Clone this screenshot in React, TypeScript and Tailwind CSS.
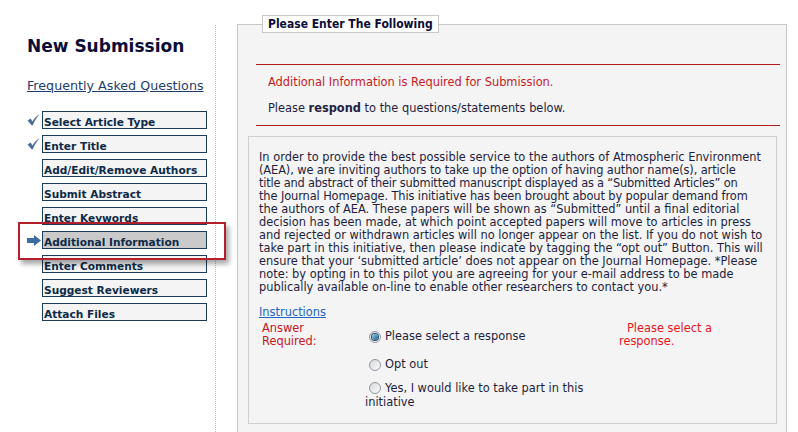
const steps = [
  { label: "Select Article Type", mark: "check" },
  { label: "Enter Title", mark: "check" },
  { label: "Add/Edit/Remove Authors" },
  { label: "Submit Abstract" },
  { label: "Enter Keywords" },
  { label: "Additional Information", mark: "arrow" },
  { label: "Enter Comments" },
  { label: "Suggest Reviewers" },
  { label: "Attach Files" },
];

// a few lines run wider in this font than in the original, so they get a little tracking
const paragraph = [
  { text: "In order to provide the best possible service to the authors of Atmospheric Environment", cls: "" },
  { text: "(AEA), we are inviting authors to take up the option of having author name(s), article", cls: "tracking-[-0.1px]" },
  { text: "title and abstract of their submitted manuscript displayed as a \u201cSubmitted Articles\u201d on", cls: "tracking-[-0.2px]" },
  { text: "the Journal Homepage. This initiative has been brought about by popular demand from", cls: "tracking-[-0.1px]" },
  { text: "the authors of AEA. These papers will be shown as \u201cSubmitted\u201d until a final editorial", cls: "" },
  { text: "decision has been made, at which point accepted papers will move to articles in press", cls: "" },
  { text: "and rejected or withdrawn articles will no longer appear on the list. If you do not wish to", cls: "" },
  { text: "take part in this initiative, then please indicate by tagging the \u201copt out\u201d Button. This will", cls: "" },
  { text: "ensure that your \u2018submitted article\u2019 does not appear on the Journal Homepage. *Please", cls: "" },
  { text: "note: by opting in to this pilot you are agreeing for your e-mail address to be made", cls: "" },
  { text: "publically available on-line to enable other researchers to contact you.*", cls: "" },
];

function CheckMark() {
  return (
    <svg width="13" height="12" viewBox="0 0 13 12">
      <path d="M0.5 6.5 L3.8 4.6 L5.4 7.6 C7.4 4.2 9.6 1.8 12.8 0.3 C9.8 3.4 7.6 6.6 5.8 11.2 H4.6 Z" fill="#4a6f96" />
    </svg>
  );
}

function Arrow() {
  return (
    <svg width="14" height="11" viewBox="0 0 14 11">
      <path d="M0 3 H7 V0 L14 5.5 L7 11 V8 H0 Z" fill="#3d6c9e" />
    </svg>
  );
}

function Radio({ checked }: { checked?: boolean }) {
  return (
    <span className="ml-[4px] mr-[4px] inline-flex h-[12px] w-[12px] shrink-0 items-center justify-center rounded-full border border-[#8e98a4] bg-gradient-to-br from-[#d8d8d8] to-[#fbfbfb]">
      {checked && <span className="h-[6px] w-[6px] rounded-full bg-gradient-to-br from-[#8fd0f0] to-[#1a5a8c] ring-1 ring-[#2a4a6a]" />}
    </span>
  );
}

export default function App() {
  return (
    <div className="relative flex h-[432px] w-[798px] overflow-hidden bg-white font-['DejaVu_Sans','Verdana',sans-serif] text-[11.4px] text-[#1e1e40]">
      {/* Sidebar */}
      <aside className="w-[215px] shrink-0 pl-[27px] pt-[36px]">
        <h1 className="text-[17px] font-bold leading-[20px] text-[#0c0c38]">New Submission</h1>
        <a href="#" className="mt-[22px] block text-[12.7px] leading-[16px] text-[#1c3d6e] underline">
          Frequently Asked Questions
        </a>
        <ul className="mt-[17px] flex flex-col gap-[6px]">
          {steps.map((s) => (
            <li key={s.label} className="flex items-center">
              <span className="flex w-[15px] items-center">
                {s.mark === "check" && <CheckMark />}
                {s.mark === "arrow" && <Arrow />}
              </span>
              <span
                className={`h-[18px] w-[165px] border border-[#1a3d5e] pl-[1px] pt-[4px] text-[10.6px] font-bold leading-[12px] text-[#0e2a48] ${
                  s.mark === "arrow" ? "bg-[#cacaca]" : "bg-[#f4f4f4]"
                }`}
              >
                {s.label}
              </span>
            </li>
          ))}
        </ul>
      </aside>

      {/* Divider */}
      <div className="mt-[25px] w-0 border-l border-dotted border-[#b8b8b8]" />

      {/* Main */}
      <main className="pl-[21px] pt-[15px]">
        <fieldset className="h-[460px] w-[550px] border border-[#c8c8c8] bg-[#f4f4f4]">
          <legend className="ml-[24px] border border-[#c8c8c8] bg-white px-[5px] font-['DejaVu_Sans_Condensed','DejaVu_Sans',sans-serif] text-[12px] font-bold leading-[16px] text-[#0c0c38]">
            Please Enter The Following
          </legend>
          <div className="ml-[18px] mr-[6px] mt-[31px] border-t border-[#b01a1a]" />
          <div className="ml-[30px] mt-[11px] leading-[13px]">
            <p className="text-[#c41a24]">Additional Information is Required for Submission.</p>
            <p className="mt-[13px]">
              Please <b>respond</b> to the questions/statements below.
            </p>
          </div>
          <div className="ml-[18px] mr-[6px] mt-[10px] border-t border-[#b01a1a]" />

          <div className="ml-[10px] mr-[9px] mt-[10px] h-[288px] border border-[#cfcfcf] pl-[10px] pt-[14px]">
            <p className="leading-[13px]">
              {paragraph.map((line) => (
                <span key={line.text} className={`block whitespace-nowrap ${line.cls}`}>
                  {line.text}
                </span>
              ))}
            </p>
            <a href="#" className="mt-[12px] block leading-[13px] text-[#2065c4] underline">
              Instructions
            </a>
            <div className="mt-[3px] grid grid-cols-[106px_254px_1fr] leading-[13px]">
              <div className="pl-[3px] text-[#c8141e]">
                Answer
                <br />
                Required:
              </div>
              <div className="flex flex-col">
                <label className="mt-[8px] flex items-center leading-[13px]">
                  <Radio checked />
                  Please select a response
                </label>
                <label className="mt-[15px] flex items-center">
                  <Radio />
                  Opt out
                </label>
                <label className="mt-[10px] block leading-[14px]">
                  <span className="inline-flex items-center align-[-2px]">
                    <Radio />
                  </span>
                  Yes, I would like to take part in this initiative
                </label>
              </div>
              <div className="text-[#e8141e]">
                <span className="block pl-[8px]">Please select a</span>
                <span className="block">response.</span>
              </div>
            </div>
          </div>
        </fieldset>
      </main>

      {/* Highlight */}
      <div className="absolute left-[18px] top-[222px] h-[38px] w-[208px] border-2 border-[#b3202c] shadow-[3px_4px_5px_rgba(0,0,0,0.35)]" />
    </div>
  );
}
